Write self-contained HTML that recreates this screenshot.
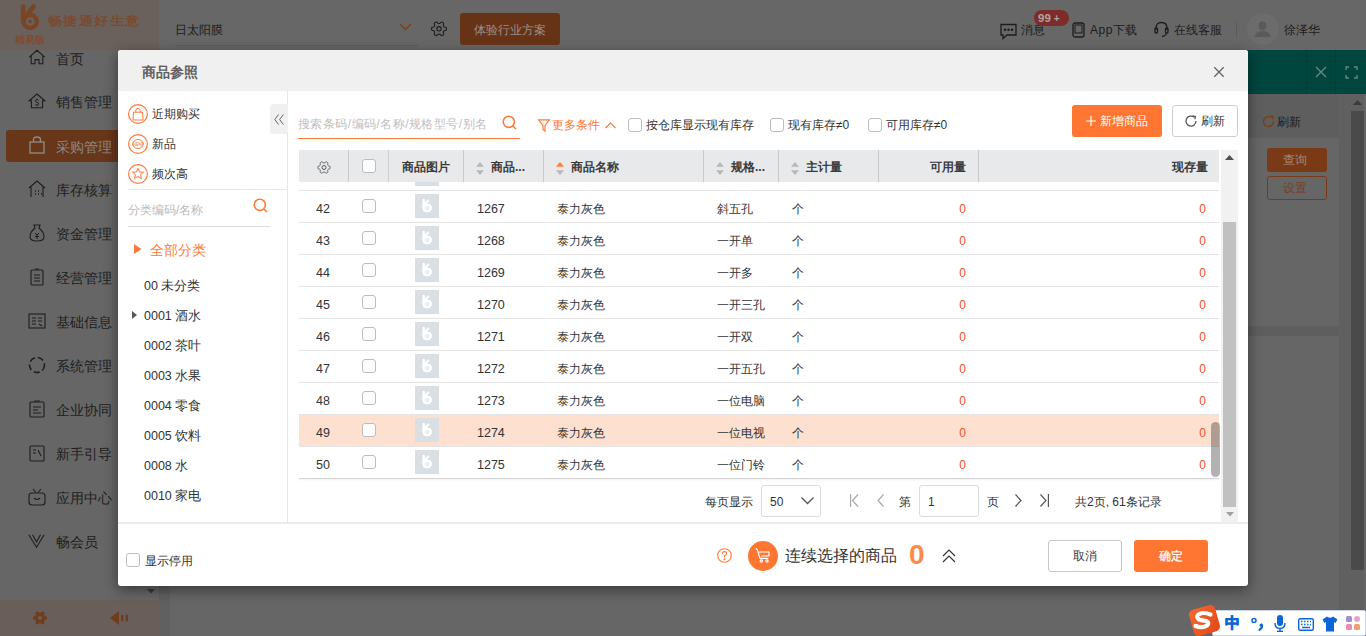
<!DOCTYPE html>
<html><head><meta charset="utf-8">
<style>
*{box-sizing:border-box;margin:0;padding:0}
html,body{width:1366px;height:636px;overflow:hidden;background:#666;font-family:"Liberation Sans",sans-serif;font-size:12px;color:#333}
.a{position:absolute}
svg{position:absolute;overflow:visible}
/* background page (darkened) */
#side{left:0;top:0;width:159px;height:636px;background:#666}
#logo{left:0;top:0;width:159px;height:50px;background:#6a615c}
#sbot{left:0;top:600px;width:159px;height:36px;background:#695e59}
#gap{left:159px;top:0;width:11px;height:636px;background:#606060}
#top{left:159px;top:0;width:1207px;height:50px;background:#676767}
.mi{position:absolute;left:56px;font-size:14px;color:#1e1e1e;line-height:20px}
.mic{position:absolute;left:28px;width:18px;height:18px}
#modal{left:118px;top:50px;width:1130px;height:536px;background:#fff;border-radius:3px;box-shadow:0 4px 14px rgba(0,0,0,.45);overflow:hidden}
#mhead{left:0;top:0;width:1130px;height:41px;background:#f0f0f0}
.t{position:absolute;white-space:nowrap;line-height:16px}
.row{position:absolute;left:181px;width:920px;height:32px;border-top:1px solid #e4e4e4}
.cell{position:absolute;top:10px;white-space:nowrap;line-height:16px;font-size:12px;color:#333}
.cb{position:absolute;width:14px;height:14px;border:1px solid #bdbdbd;border-radius:3px;background:#fff}
.img{position:absolute;left:297px;width:24px;height:24px;background:#dadfe3}
.num{font-size:12.5px}
.z{color:#f24e1e}
</style></head>
<body>

<!-- sidebar -->
<div class="a" id="side"></div>
<div class="a" style="left:142px;top:50px;width:17px;height:550px;background:#676767"></div>
<svg style="left:147px;top:589px" width="8" height="5"><path d="M0 0H8L4 4.5Z" fill="#3a3a3a"/></svg>
<div class="a" id="logo"></div>
<svg style="left:0;top:0" width="45" height="35" fill="none" stroke="#7a4526" stroke-linecap="round"><path d="M23.2 6.6V21.5" stroke-width="4.8"/><path d="M33.4 6.6L28.5 13" stroke-width="4.8"/><circle cx="30.2" cy="21.4" r="6.6" stroke-width="4.4"/><path d="M30.2 19L32.6 21.4L30.2 23.8L27.8 21.4Z" fill="#7a4526" stroke="none"/></svg>
<div class="t" style="left:48px;top:14.5px;font-size:14px;font-weight:bold;color:#7a4a30;letter-spacing:1.4px;line-height:15px;transform:scaleY(0.84);transform-origin:0 0">畅捷通好生意</div>
<div class="t" style="left:15px;top:33px;font-size:10px;color:#84482a;line-height:14px;-webkit-text-stroke:0.2px #84482a">精易版</div>
<div class="a" id="sbot"></div>
<svg style="left:33px;top:611px" width="14" height="14" viewBox="0 0 14 14"><path fill-rule="evenodd" d="M14.05 7.00 L14.04 7.31 L14.01 7.61 L13.96 7.92 L13.85 8.21 L13.56 8.45 L12.89 8.58 L12.23 8.65 L11.92 8.79 L11.78 8.98 L11.68 9.18 L11.57 9.38 L11.46 9.58 L11.35 9.77 L11.23 9.96 L11.11 10.15 L11.01 10.37 L11.04 10.70 L11.31 11.31 L11.54 11.95 L11.47 12.33 L11.28 12.57 L11.04 12.77 L10.78 12.94 L10.52 13.10 L10.25 13.25 L9.98 13.38 L9.69 13.49 L9.38 13.54 L9.02 13.41 L8.58 12.89 L8.19 12.35 L7.91 12.16 L7.68 12.13 L7.45 12.14 L7.22 12.15 L7.00 12.15 L6.78 12.15 L6.55 12.14 L6.32 12.13 L6.09 12.16 L5.81 12.35 L5.42 12.89 L4.98 13.41 L4.62 13.54 L4.31 13.49 L4.02 13.38 L3.75 13.25 L3.48 13.10 L3.22 12.94 L2.96 12.77 L2.72 12.57 L2.53 12.33 L2.46 11.95 L2.69 11.31 L2.96 10.70 L2.99 10.37 L2.89 10.15 L2.77 9.96 L2.65 9.77 L2.54 9.58 L2.43 9.38 L2.32 9.18 L2.22 8.98 L2.08 8.79 L1.77 8.65 L1.11 8.58 L0.44 8.45 L0.15 8.21 L0.04 7.92 L-0.01 7.61 L-0.04 7.31 L-0.05 7.00 L-0.04 6.69 L-0.01 6.39 L0.04 6.08 L0.15 5.79 L0.44 5.55 L1.11 5.42 L1.77 5.35 L2.08 5.21 L2.22 5.02 L2.32 4.82 L2.43 4.62 L2.54 4.42 L2.65 4.23 L2.77 4.04 L2.89 3.85 L2.99 3.63 L2.96 3.30 L2.69 2.69 L2.46 2.05 L2.53 1.67 L2.72 1.43 L2.96 1.23 L3.22 1.06 L3.48 0.90 L3.75 0.75 L4.02 0.62 L4.31 0.51 L4.62 0.46 L4.98 0.59 L5.42 1.11 L5.81 1.65 L6.09 1.84 L6.32 1.87 L6.55 1.86 L6.78 1.85 L7.00 1.85 L7.22 1.85 L7.45 1.86 L7.68 1.87 L7.91 1.84 L8.19 1.65 L8.58 1.11 L9.02 0.59 L9.38 0.46 L9.69 0.51 L9.98 0.62 L10.25 0.75 L10.52 0.90 L10.78 1.06 L11.04 1.23 L11.28 1.43 L11.47 1.67 L11.54 2.05 L11.31 2.69 L11.04 3.30 L11.01 3.63 L11.11 3.85 L11.23 4.04 L11.35 4.23 L11.46 4.42 L11.57 4.62 L11.68 4.82 L11.78 5.02 L11.92 5.21 L12.23 5.35 L12.89 5.42 L13.56 5.55 L13.85 5.79 L13.96 6.08 L14.01 6.39 L14.04 6.69Z M9 7 A2 2 0 1 0 5 7 A2 2 0 1 0 9 7Z" fill="#703c1e"/></svg>
<svg style="left:110px;top:611px" width="20" height="14" viewBox="0 0 20 14"><path d="M0 7 L9 0 V14Z" fill="#703c1e"/><rect x="11" y="3.8" width="2.4" height="6.4" fill="#703c1e"/><rect x="15.6" y="3.8" width="2.4" height="6.4" fill="#703c1e"/></svg>
<div class="a" id="gap"></div>
<!-- menu -->
<div class="a" style="left:6px;top:130px;width:148px;height:32px;background:#683619;border-radius:3px"></div>
<div class="mi" style="top:49px">首页</div>
<div class="mi" style="top:92px">销售管理</div>
<div class="mi" style="top:137px;color:#8c8884">采购管理</div>
<div class="mi" style="top:180px">库存核算</div>
<div class="mi" style="top:224px">资金管理</div>
<div class="mi" style="top:268px">经营管理</div>
<div class="mi" style="top:312px">基础信息</div>
<div class="mi" style="top:356px">系统管理</div>
<div class="mi" style="top:400px">企业协同</div>
<div class="mi" style="top:444px">新手引导</div>
<div class="mi" style="top:488px">应用中心</div>
<div class="mi" style="top:532px">畅会员</div>
<svg style="left:28px;top:49px" width="18" height="17" viewBox="0 0 18 17" fill="none" stroke="#1e1e1e" stroke-width="1.1"><path d="M1.2 8.2 L9 1.3 L16.8 8.2 M3.2 6.6 V14.8 H7 V10.6 H11 V14.8 H14.8 V6.6"/></svg>
<svg style="left:28px;top:93px" width="18" height="17" viewBox="0 0 18 17" fill="none" stroke="#1e1e1e" stroke-width="1.1"><path d="M9 1 L16.8 7.8 H14.6 V14.8 H3.4 V7.8 H1.2Z"/><path d="M10.6 7.6 Q10.2 6.6 9 6.6 Q7.4 6.6 7.4 7.9 Q7.4 9 9 9.3 Q10.7 9.6 10.7 10.9 Q10.7 12.2 9 12.2 Q7.7 12.2 7.3 11.2 M9 5.6V6.6M9 12.2V13.2" stroke-width="0.9"/></svg>
<svg style="left:29px;top:136px" width="16" height="18" viewBox="0 0 16 18" fill="none" stroke="#8c8884" stroke-width="1.4"><rect x="1" y="6" width="14" height="11"/><path d="M4.5 6 V3.5 Q4.5 1 8 1 Q11.5 1 11.5 3.5 V6"/></svg>
<svg style="left:28px;top:180px" width="18" height="18" viewBox="0 0 18 18" fill="none" stroke="#1e1e1e" stroke-width="1.1"><path d="M1 8 L9 1 L17 8 M3 7 V17 M15 7 V17"/><path d="M7 11h1M10 11h1M7 14h1M10 14h1M13 14h1" stroke-width="1.6"/></svg>
<svg style="left:29px;top:224px" width="16" height="18" viewBox="0 0 16 18" fill="none" stroke="#1e1e1e" stroke-width="1.1"><path d="M5 1 H11 L10 4 Q15 8 15 13 Q15 17 8 17 Q1 17 1 13 Q1 8 6 4Z"/><path d="M6 9 L8 11 L10 9 M8 11 V15 M6 12.5 H10" stroke-width="1"/></svg>
<svg style="left:30px;top:268px" width="14" height="18" viewBox="0 0 14 18" fill="none" stroke="#1e1e1e" stroke-width="1.1"><rect x="1" y="2" width="12" height="15" rx="1"/><path d="M4 7H10M4 10H10M4 13H10M5 1H9"/></svg>
<svg style="left:28px;top:313px" width="18" height="16" viewBox="0 0 18 16" fill="none" stroke="#1e1e1e" stroke-width="1.1"><rect x="1" y="1" width="16" height="14"/><path d="M4 5H8M4 8H8M4 11H8M10 5H14M10 8H14M11 11L14 13"/></svg>
<svg style="left:28px;top:356px" width="18" height="18" viewBox="0 0 18 18" fill="none" stroke="#1e1e1e" stroke-width="1.5" stroke-dasharray="6 3"><circle cx="9" cy="9" r="7.5"/></svg>
<svg style="left:29px;top:400px" width="16" height="18" viewBox="0 0 16 18" fill="none" stroke="#1e1e1e" stroke-width="1.1"><rect x="1" y="2" width="14" height="15" rx="1"/><path d="M5 1H11M4 7H12M4 10H9M4 13H12"/></svg>
<svg style="left:29px;top:444px" width="16" height="18" viewBox="0 0 16 18" fill="none" stroke="#1e1e1e" stroke-width="1.1"><rect x="1" y="2" width="14" height="15" rx="1"/><path d="M4 6H7M4 9H7M9 6L12 12"/></svg>
<svg style="left:28px;top:488px" width="18" height="18" viewBox="0 0 18 18" fill="none" stroke="#1e1e1e" stroke-width="1.1"><rect x="1" y="5" width="16" height="12" rx="3"/><path d="M5 1L8 4.5M13 1L10 4.5M6 10Q9 13 12 10"/></svg>
<svg style="left:28px;top:534px" width="17" height="14" viewBox="0 0 17 14" fill="none" stroke="#1e1e1e" stroke-width="1.1"><path d="M0.8 0.8 L8.5 13.2 L16.2 0.8 M4.5 0.8 L8.5 7.8 L12.5 0.8"/></svg>
<!-- top header -->
<div class="a" id="top"></div>
<div class="t" style="left:175px;top:22px;font-size:12px;color:#1c1c1c">日太阳膜</div>
<div class="a" style="left:175px;top:45px;width:243px;height:1px;background:#5a5a5a"></div>
<svg style="left:399px;top:23px" width="13" height="8"><path d="M1 1 L6.5 6.5 L12 1" fill="none" stroke="#7a3e1c" stroke-width="1.4"/></svg>
<svg style="left:431px;top:21px" width="17" height="17" viewBox="0 0 17 17" fill="none" stroke="#1c1c1c" stroke-width="1.05"><path d="M15.46 7.80 L15.44 8.19 L15.38 8.58 L15.22 8.94 L14.85 9.26 L14.18 9.46 L13.51 9.59 L13.13 9.77 L12.92 9.99 L12.77 10.23 L12.62 10.47 L12.49 10.71 L12.36 10.96 L12.27 11.26 L12.31 11.68 L12.53 12.33 L12.69 13.01 L12.60 13.48 L12.36 13.80 L12.06 14.05 L11.73 14.26 L11.38 14.44 L11.02 14.58 L10.62 14.62 L10.16 14.46 L9.66 13.98 L9.20 13.47 L8.86 13.22 L8.56 13.15 L8.28 13.14 L8.00 13.14 L7.72 13.14 L7.44 13.15 L7.14 13.22 L6.80 13.47 L6.34 13.98 L5.84 14.46 L5.38 14.62 L4.98 14.58 L4.62 14.44 L4.27 14.26 L3.94 14.05 L3.64 13.80 L3.40 13.48 L3.31 13.01 L3.47 12.33 L3.69 11.68 L3.73 11.26 L3.64 10.96 L3.51 10.71 L3.38 10.47 L3.23 10.23 L3.08 9.99 L2.87 9.77 L2.49 9.59 L1.82 9.46 L1.15 9.26 L0.78 8.94 L0.62 8.58 L0.56 8.19 L0.54 7.80 L0.56 7.41 L0.62 7.02 L0.78 6.66 L1.15 6.34 L1.82 6.14 L2.49 6.01 L2.87 5.83 L3.08 5.61 L3.23 5.37 L3.38 5.13 L3.51 4.89 L3.64 4.64 L3.73 4.34 L3.69 3.92 L3.47 3.27 L3.31 2.59 L3.40 2.12 L3.64 1.80 L3.94 1.55 L4.27 1.34 L4.62 1.16 L4.98 1.02 L5.38 0.98 L5.84 1.14 L6.34 1.62 L6.80 2.13 L7.14 2.38 L7.44 2.45 L7.72 2.46 L8.00 2.46 L8.28 2.46 L8.56 2.45 L8.86 2.38 L9.20 2.13 L9.66 1.62 L10.16 1.14 L10.62 0.98 L11.02 1.02 L11.38 1.16 L11.73 1.34 L12.06 1.55 L12.36 1.80 L12.60 2.12 L12.69 2.59 L12.53 3.27 L12.31 3.92 L12.27 4.34 L12.36 4.64 L12.49 4.89 L12.62 5.13 L12.77 5.37 L12.92 5.61 L13.13 5.83 L13.51 6.01 L14.18 6.14 L14.85 6.34 L15.22 6.66 L15.38 7.02 L15.44 7.41Z"/><circle cx="8" cy="7.8" r="2.2"/></svg>
<div class="a" style="left:460px;top:13px;width:100px;height:32px;background:#673316;border-radius:3px"></div>
<div class="t" style="left:474px;top:22px;font-size:12px;color:#9a8f8a">体验行业方案</div>
<svg style="left:1000px;top:23px" width="17" height="17" viewBox="0 0 17 17" fill="none" stroke="#1c1c1c" stroke-width="1.3"><path d="M1 1.5 H16 V12 H7 L3 15.5 V12 H1Z"/><circle cx="5" cy="6.8" r="0.6" fill="#1c1c1c"/><circle cx="8.5" cy="6.8" r="0.6" fill="#1c1c1c"/><circle cx="12" cy="6.8" r="0.6" fill="#1c1c1c"/></svg>
<div class="t" style="left:1021px;top:22px;font-size:12px;color:#1c1c1c">消息</div>
<div class="a" style="left:1034px;top:10px;width:35px;height:16px;background:#7e2c2a;border-radius:8px"></div>
<div class="t" style="left:1038px;top:10px;font-size:11.5px;font-weight:bold;color:#b0a2a2;line-height:16px">99<span style="font-size:10px;margin-left:3px">+</span></div>
<svg style="left:1072px;top:22px" width="13" height="16" viewBox="0 0 13 16" fill="none" stroke="#1c1c1c" stroke-width="1.3"><rect x="1" y="1" width="11" height="14" rx="2"/><rect x="3" y="3" width="7" height="8" stroke-width="1"/></svg>
<div class="t" style="left:1090px;top:22px;font-size:12px;color:#1c1c1c;letter-spacing:0.5px">App下载</div>
<svg style="left:1154px;top:21px" width="15" height="17" viewBox="0 0 15 17" fill="none" stroke="#1c1c1c" stroke-width="1.3"><path d="M2 9 V7 Q2 1.5 7.5 1.5 Q13 1.5 13 7 V9"/><rect x="1" y="7" width="2.5" height="5" rx="1"/><rect x="11.5" y="7" width="2.5" height="5" rx="1"/><path d="M12.5 12 Q12 15 8 15.5"/></svg>
<div class="t" style="left:1174px;top:22px;font-size:12px;color:#1c1c1c">在线客服</div>
<div class="a" style="left:1236px;top:21px;width:1px;height:16px;background:#5a5a5a"></div>
<div class="a" style="left:1247px;top:13px;width:32px;height:32px;border-radius:50%;background:#6c6c6c"></div>
<svg style="left:1254px;top:20px" width="17" height="18" viewBox="0 0 17 18"><ellipse cx="8.5" cy="5.8" rx="4" ry="4.6" fill="#5a5a5a"/><path d="M0.5 17 Q1.5 11.2 8.5 11 Q15.5 11.2 16.5 17Z" fill="#5a5a5a"/></svg>
<div class="t" style="left:1284px;top:22px;font-size:12px;color:#1c1c1c">徐泽华</div>
<!-- right background panel -->
<div class="a" style="left:1100px;top:50px;width:266px;height:44px;background:#00463f"></div>
<div class="a" style="left:1306px;top:50px;width:1px;height:44px;background:#003f36"></div>
<div class="a" style="left:1335px;top:50px;width:1px;height:44px;background:#003f36"></div>
<svg style="left:1315px;top:66px" width="12" height="12"><path d="M1 1L11 11M11 1L1 11" stroke="#5f8a83" stroke-width="1.4"/></svg>
<svg style="left:1345px;top:66px" width="13" height="13" fill="none" stroke="#5f8a83" stroke-width="1.4"><path d="M1 4V1H4M9 1H12V4M12 9V12H9M4 12H1V9"/></svg>
<div class="a" style="left:1100px;top:94px;width:251px;height:44px;background:#5e5e5e"></div>
<svg style="left:1262px;top:115px" width="13" height="13" viewBox="0 0 13 13" fill="none" stroke="#7a3e1c" stroke-width="1.5"><path d="M11.5 6.5 A5 5 0 1 1 9.5 2.5"/><path d="M8 1 L11 1.5 L10.5 4.5" stroke-width="1.3"/></svg>
<div class="t" style="left:1277px;top:114px;font-size:12px;color:#1c1c1c">刷新</div>
<div class="a" style="left:1100px;top:138px;width:239px;height:188px;background:#666"></div>
<div class="a" style="left:1100px;top:326px;width:239px;height:10px;background:#5e5e5e"></div>
<div class="a" style="left:1100px;top:336px;width:239px;height:300px;background:#666"></div>
<div class="a" style="left:1339px;top:94px;width:12px;height:542px;background:#606060"></div>
<div class="a" style="left:1351px;top:94px;width:13px;height:542px;background:#606060"></div>
<svg style="left:1353px;top:100px" width="9" height="6"><path d="M0 5H9L4.5 0Z" fill="#3a3a3a"/></svg>
<div class="a" style="left:1351px;top:111px;width:13px;height:459px;background:#4a4a4a;border-radius:0 0 2px 2px"></div>
<div class="a" style="left:1267px;top:148px;width:60px;height:24px;background:#7a3a16;border-radius:3px"></div>
<div class="t" style="left:1283px;top:152px;font-size:12px;color:#a08a7e">查询</div>
<div class="a" style="left:1267px;top:176px;width:60px;height:24px;border:1px solid #7a3a16;border-radius:3px"></div>
<div class="t" style="left:1283px;top:180px;font-size:12px;color:#7a3e1c">设置</div>


<div class="a" id="modal">
 <div class="a" id="mhead"></div>
 <div class="t" style="left:24px;top:14px;font-size:14px;font-weight:bold;color:#606060;line-height:16px">商品参照</div>
 <svg style="left:1096px;top:17px" width="10" height="10"><path d="M0.3 0.3L9.7 9.7M9.7 0.3L0.3 9.7" stroke="#606060" stroke-width="1.25"/></svg>
 <!-- left panel -->
 <div class="a" style="left:169px;top:41px;width:1px;height:431px;background:#e6e6e6"></div>
 <div class="a" style="left:152px;top:54px;width:18px;height:30px;background:#f0f0f0;border-radius:3px 0 0 3px"></div>
 <svg style="left:156px;top:64px" width="10" height="11" fill="none" stroke="#666" stroke-width="1"><path d="M4.6 0.5L0.8 5.5L4.6 10.5M9.4 0.5L5.6 5.5L9.4 10.5"/></svg>
 <svg style="left:10px;top:54px" width="20" height="20" fill="none" stroke="#fe7a3a" stroke-width="1.2"><circle cx="10" cy="10" r="9.4"/><path d="M5.5 8.2H14.5L15 16H5Z M7.8 8.2V6.3Q7.8 4.3 10 4.3Q12.2 4.3 12.2 6.3V8.2" stroke-width="1"/></svg>
 <div class="t" style="left:34px;top:56px;font-size:12px;color:#333">近期购买</div>
 <svg style="left:10px;top:84px" width="20" height="20" fill="none" stroke="#fe7a3a" stroke-width="1.2"><circle cx="10" cy="10" r="9.4"/><path d="M4.5 10 Q6 5.5 10 5.5 Q14 5.5 15.5 10 Q14 14.5 10 14.5 Q6 14.5 4.5 10Z" stroke-width="1"/><text x="10" y="11.6" font-size="4.5" text-anchor="middle" fill="#fe7a3a" stroke="none" font-family="Liberation Sans">NEW</text></svg>
 <div class="t" style="left:34px;top:86px;font-size:12px;color:#333">新品</div>
 <svg style="left:10px;top:114px" width="20" height="20" fill="none" stroke="#fe7a3a" stroke-width="1.2"><circle cx="10" cy="10" r="9.4"/><path d="M10 4.3L11.6 8L15.5 8.2L12.5 10.7L13.5 14.6L10 12.4L6.5 14.6L7.5 10.7L4.5 8.2L8.4 8Z" stroke-width="1"/></svg>
 <div class="t" style="left:34px;top:116px;font-size:12px;color:#333">频次高</div>
 <div class="a" style="left:10px;top:139px;width:160px;height:1px;background:#e8e8e8"></div>
 <div class="t" style="left:10px;top:152px;font-size:12px;color:#bbb">分类编码/名称</div>
 <svg style="left:135px;top:148px" width="15" height="15" fill="none" stroke="#fe7a3a" stroke-width="1.6"><circle cx="6.8" cy="6.8" r="5.6"/><path d="M11 11L14 14"/></svg>
 <div class="a" style="left:10px;top:176px;width:142px;height:1px;background:#dcdcdc"></div>
 <svg style="left:16px;top:194px" width="8" height="10"><path d="M0 0L7.5 5L0 10Z" fill="#fe7a3a"/></svg>
 <div class="t" style="left:32px;top:192px;font-size:14px;color:#fe7a3a">全部分类</div>
 <div class="t" style="left:26px;top:228px;font-size:12.5px;color:#333">00 未分类</div>
<div class="t" style="left:26px;top:258px;font-size:12.5px;color:#333">0001 酒水</div>
<svg style="left:14px;top:261px" width="5" height="8"><path d="M0 0L5 4L0 8Z" fill="#555"/></svg>
<div class="t" style="left:26px;top:288px;font-size:12.5px;color:#333">0002 茶叶</div>
<div class="t" style="left:26px;top:318px;font-size:12.5px;color:#333">0003 水果</div>
<div class="t" style="left:26px;top:348px;font-size:12.5px;color:#333">0004 零食</div>
<div class="t" style="left:26px;top:378px;font-size:12.5px;color:#333">0005 饮料</div>
<div class="t" style="left:26px;top:408px;font-size:12.5px;color:#333">0008 水</div>
<div class="t" style="left:26px;top:438px;font-size:12.5px;color:#333">0010 家电</div>

 <div class="a" style="left:0;top:472px;width:1130px;height:2px;background:#ececec"></div>
 <div class="cb" style="left:8px;top:503px;width:14px;height:14px"></div>
 <div class="t" style="left:27px;top:503px;font-size:12px;color:#333">显示停用</div>
 <!-- toolbar -->
 <div class="t" style="left:180px;top:66px;font-size:12px;color:#c0c0c0;letter-spacing:0.45px">搜索条码/编码/名称/规格型号/别名</div>
 <svg style="left:384px;top:65px" width="15" height="15" fill="none" stroke="#fe7a3a" stroke-width="1.6"><circle cx="6.8" cy="6.8" r="5.6"/><path d="M11 11L14 14"/></svg>
 <div class="a" style="left:180px;top:88px;width:222px;height:1.3px;background:#fe7a3a"></div>
 <svg style="left:420px;top:69px" width="12" height="13" fill="none" stroke="#fe7a3a" stroke-width="1.2"><path d="M0.6 0.8H11.4L7 6.5V12L5 10.5V6.5Z"/></svg>
 <div class="t" style="left:434px;top:67px;font-size:12px;color:#fe7a3a">更多条件</div>
 <svg style="left:487px;top:72px" width="11" height="7" fill="none" stroke="#fe7a3a" stroke-width="1.2"><path d="M0.5 6L5.5 1L10.5 6"/></svg>
 <div class="cb" style="left:510px;top:68px"></div>
 <div class="t" style="left:528px;top:67px;font-size:12px;color:#333">按仓库显示现有库存</div>
 <div class="cb" style="left:652px;top:68px"></div>
 <div class="t" style="left:670px;top:67px;font-size:12px;color:#333">现有库存≠0</div>
 <div class="cb" style="left:750px;top:68px"></div>
 <div class="t" style="left:768px;top:67px;font-size:12px;color:#333">可用库存≠0</div>
 <div class="a" style="left:954px;top:55px;width:90px;height:32px;background:#fe7632;border-radius:3px"></div>
 <svg style="left:968px;top:66px" width="10" height="10"><path d="M5 0V10M0 5H10" stroke="#fff" stroke-width="1.2"/></svg><div class="t" style="left:982px;top:63px;font-size:12px;color:#fff">新增商品</div>
 <div class="a" style="left:1054px;top:55px;width:66px;height:32px;border:1px solid #cfcfcf;border-radius:3px"></div>
 <svg style="left:1067px;top:65px" width="12" height="12" fill="none" stroke="#555" stroke-width="1.3"><path d="M11 6A5 5 0 1 1 9.2 2.2"/><path d="M7.6 0.8L10.4 1.4L9.9 4.2"/></svg>
 <div class="t" style="left:1083px;top:63px;font-size:12px;color:#333">刷新</div>
 <!-- table -->
 <div class="a" style="left:181px;top:100px;width:920px;height:32px;background:#e8e9eb"></div>
 <div class="a" style="left:230px;top:100px;width:1px;height:32px;background:#c9c9c9"></div>
 <div class="a" style="left:270px;top:100px;width:1px;height:32px;background:#d0d0d0"></div>
 <div class="a" style="left:345px;top:100px;width:1px;height:32px;background:#c9c9c9"></div>
 <div class="a" style="left:425px;top:100px;width:1px;height:32px;background:#c9c9c9"></div>
 <div class="a" style="left:585px;top:100px;width:1px;height:32px;background:#c9c9c9"></div>
 <div class="a" style="left:660px;top:100px;width:1px;height:32px;background:#c9c9c9"></div>
 <div class="a" style="left:760px;top:100px;width:1px;height:32px;background:#c9c9c9"></div>
 <div class="a" style="left:860px;top:100px;width:1px;height:32px;background:#c9c9c9"></div>
 <svg style="left:199px;top:111px" width="14" height="13" viewBox="0 0 14 13" fill="none" stroke="#555" stroke-width="0.95"><path d="M13.14 6.50 L13.13 6.82 L13.09 7.14 L13.00 7.45 L12.76 7.72 L12.22 7.90 L11.67 8.02 L11.41 8.19 L11.27 8.40 L11.15 8.62 L11.04 8.83 L10.91 9.04 L10.78 9.25 L10.67 9.47 L10.65 9.79 L10.82 10.32 L10.94 10.87 L10.82 11.22 L10.60 11.45 L10.34 11.65 L10.07 11.82 L9.79 11.97 L9.49 12.09 L9.18 12.17 L8.82 12.10 L8.40 11.72 L8.02 11.31 L7.74 11.17 L7.49 11.15 L7.24 11.16 L7.00 11.16 L6.76 11.16 L6.51 11.15 L6.26 11.17 L5.98 11.31 L5.60 11.72 L5.18 12.10 L4.82 12.17 L4.51 12.09 L4.21 11.97 L3.93 11.82 L3.66 11.65 L3.40 11.45 L3.18 11.22 L3.06 10.87 L3.18 10.32 L3.35 9.79 L3.33 9.47 L3.22 9.25 L3.09 9.04 L2.96 8.83 L2.85 8.62 L2.73 8.40 L2.59 8.19 L2.33 8.02 L1.78 7.90 L1.24 7.72 L1.00 7.45 L0.91 7.14 L0.87 6.82 L0.86 6.50 L0.87 6.18 L0.91 5.86 L1.00 5.55 L1.24 5.28 L1.78 5.10 L2.33 4.98 L2.59 4.81 L2.73 4.60 L2.85 4.38 L2.96 4.17 L3.09 3.96 L3.22 3.75 L3.33 3.53 L3.35 3.21 L3.18 2.68 L3.06 2.13 L3.18 1.78 L3.40 1.55 L3.66 1.35 L3.93 1.18 L4.21 1.03 L4.51 0.91 L4.82 0.83 L5.18 0.90 L5.60 1.28 L5.98 1.69 L6.26 1.83 L6.51 1.85 L6.76 1.84 L7.00 1.84 L7.24 1.84 L7.49 1.85 L7.74 1.83 L8.02 1.69 L8.40 1.28 L8.82 0.90 L9.18 0.83 L9.49 0.91 L9.79 1.03 L10.07 1.18 L10.34 1.35 L10.60 1.55 L10.82 1.78 L10.94 2.13 L10.82 2.68 L10.65 3.21 L10.67 3.53 L10.78 3.75 L10.91 3.96 L11.04 4.17 L11.15 4.38 L11.27 4.60 L11.41 4.81 L11.67 4.98 L12.22 5.10 L12.76 5.28 L13.00 5.55 L13.09 5.86 L13.13 6.18Z"/><circle cx="7" cy="6.5" r="2"/></svg>
 <div class="cb" style="left:244px;top:109px"></div>
 <div class="t" style="left:284px;top:109px;font-size:12px;font-weight:bold;color:#3a3a3a">商品图片</div>
 <svg style="left:358px;top:112px" width="8" height="14"><path d="M0 4.7L4 0L8 4.7Z M0 8.3L4 13L8 8.3Z" fill="#b8b8b8"/></svg>
 <div class="t" style="left:373px;top:109px;font-size:12px;font-weight:bold;color:#3a3a3a">商品...</div>
 <svg style="left:438px;top:112px" width="8" height="14"><path d="M0 4.7L4 0L8 4.7Z" fill="#fe7a3a"/><path d="M0 8.3L4 13L8 8.3Z" fill="#b8b8b8"/></svg>
 <div class="t" style="left:453px;top:109px;font-size:12px;font-weight:bold;color:#3a3a3a">商品名称</div>
 <svg style="left:598px;top:112px" width="8" height="14"><path d="M0 4.7L4 0L8 4.7Z M0 8.3L4 13L8 8.3Z" fill="#b8b8b8"/></svg>
 <div class="t" style="left:613px;top:109px;font-size:12px;font-weight:bold;color:#3a3a3a">规格...</div>
 <svg style="left:673px;top:112px" width="8" height="14"><path d="M0 4.7L4 0L8 4.7Z M0 8.3L4 13L8 8.3Z" fill="#b8b8b8"/></svg>
 <div class="t" style="left:688px;top:109px;font-size:12px;font-weight:bold;color:#3a3a3a">主计量</div>
 <div class="t" style="left:812px;top:109px;font-size:12px;font-weight:bold;color:#3a3a3a">可用量</div>
 <div class="t" style="left:1054px;top:109px;font-size:12px;font-weight:bold;color:#3a3a3a">现存量</div>
 <div class="a" style="left:181px;top:132px;width:920px;height:340px;overflow:hidden">
  <div class="img" style="left:116px;top:-20px"></div>
 </div>
 <div class="a" style="left:0;top:0;width:1130px;height:0;">
 <div class="row" style="top:140px;">
<div class="cell num" style="left:17px">42</div>
<div class="cb" style="left:63px;top:8px"></div>
<div class="img" style="left:116px;top:3px"><svg style="left:6px;top:3px" width="12" height="17" viewBox="0 0 22 27"><path d="M3 3 Q3 1 5 1 Q7 1 7 3 L7 9 Q9 5 12 3 Q14 2 15 3.5 Q16 5 14 7 Q12 9 11 11 Q13 10 15 10.5 Q20 12 20 18 Q20 25 12 26 Q3 26 2 17 Z" fill="#fff"/><circle cx="11.5" cy="18" r="3.6" fill="#dadfe3"/><path d="M11.5 15.6 L13.9 18 L11.5 20.4 L9.1 18Z" fill="#fff"/></svg></div>
<div class="cell num" style="left:178px">1267</div>
<div class="cell" style="left:258px">泰力灰色</div>
<div class="cell" style="left:418px">斜五孔</div>
<div class="cell" style="left:493px">个</div>
<div class="cell z" style="left:657px;width:10px;text-align:right">0</div>
<div class="cell z" style="left:897px;width:10px;text-align:right">0</div>
</div>
<div class="row" style="top:172px;">
<div class="cell num" style="left:17px">43</div>
<div class="cb" style="left:63px;top:8px"></div>
<div class="img" style="left:116px;top:3px"><svg style="left:6px;top:3px" width="12" height="17" viewBox="0 0 22 27"><path d="M3 3 Q3 1 5 1 Q7 1 7 3 L7 9 Q9 5 12 3 Q14 2 15 3.5 Q16 5 14 7 Q12 9 11 11 Q13 10 15 10.5 Q20 12 20 18 Q20 25 12 26 Q3 26 2 17 Z" fill="#fff"/><circle cx="11.5" cy="18" r="3.6" fill="#dadfe3"/><path d="M11.5 15.6 L13.9 18 L11.5 20.4 L9.1 18Z" fill="#fff"/></svg></div>
<div class="cell num" style="left:178px">1268</div>
<div class="cell" style="left:258px">泰力灰色</div>
<div class="cell" style="left:418px">一开单</div>
<div class="cell" style="left:493px">个</div>
<div class="cell z" style="left:657px;width:10px;text-align:right">0</div>
<div class="cell z" style="left:897px;width:10px;text-align:right">0</div>
</div>
<div class="row" style="top:204px;">
<div class="cell num" style="left:17px">44</div>
<div class="cb" style="left:63px;top:8px"></div>
<div class="img" style="left:116px;top:3px"><svg style="left:6px;top:3px" width="12" height="17" viewBox="0 0 22 27"><path d="M3 3 Q3 1 5 1 Q7 1 7 3 L7 9 Q9 5 12 3 Q14 2 15 3.5 Q16 5 14 7 Q12 9 11 11 Q13 10 15 10.5 Q20 12 20 18 Q20 25 12 26 Q3 26 2 17 Z" fill="#fff"/><circle cx="11.5" cy="18" r="3.6" fill="#dadfe3"/><path d="M11.5 15.6 L13.9 18 L11.5 20.4 L9.1 18Z" fill="#fff"/></svg></div>
<div class="cell num" style="left:178px">1269</div>
<div class="cell" style="left:258px">泰力灰色</div>
<div class="cell" style="left:418px">一开多</div>
<div class="cell" style="left:493px">个</div>
<div class="cell z" style="left:657px;width:10px;text-align:right">0</div>
<div class="cell z" style="left:897px;width:10px;text-align:right">0</div>
</div>
<div class="row" style="top:236px;">
<div class="cell num" style="left:17px">45</div>
<div class="cb" style="left:63px;top:8px"></div>
<div class="img" style="left:116px;top:3px"><svg style="left:6px;top:3px" width="12" height="17" viewBox="0 0 22 27"><path d="M3 3 Q3 1 5 1 Q7 1 7 3 L7 9 Q9 5 12 3 Q14 2 15 3.5 Q16 5 14 7 Q12 9 11 11 Q13 10 15 10.5 Q20 12 20 18 Q20 25 12 26 Q3 26 2 17 Z" fill="#fff"/><circle cx="11.5" cy="18" r="3.6" fill="#dadfe3"/><path d="M11.5 15.6 L13.9 18 L11.5 20.4 L9.1 18Z" fill="#fff"/></svg></div>
<div class="cell num" style="left:178px">1270</div>
<div class="cell" style="left:258px">泰力灰色</div>
<div class="cell" style="left:418px">一开三孔</div>
<div class="cell" style="left:493px">个</div>
<div class="cell z" style="left:657px;width:10px;text-align:right">0</div>
<div class="cell z" style="left:897px;width:10px;text-align:right">0</div>
</div>
<div class="row" style="top:268px;">
<div class="cell num" style="left:17px">46</div>
<div class="cb" style="left:63px;top:8px"></div>
<div class="img" style="left:116px;top:3px"><svg style="left:6px;top:3px" width="12" height="17" viewBox="0 0 22 27"><path d="M3 3 Q3 1 5 1 Q7 1 7 3 L7 9 Q9 5 12 3 Q14 2 15 3.5 Q16 5 14 7 Q12 9 11 11 Q13 10 15 10.5 Q20 12 20 18 Q20 25 12 26 Q3 26 2 17 Z" fill="#fff"/><circle cx="11.5" cy="18" r="3.6" fill="#dadfe3"/><path d="M11.5 15.6 L13.9 18 L11.5 20.4 L9.1 18Z" fill="#fff"/></svg></div>
<div class="cell num" style="left:178px">1271</div>
<div class="cell" style="left:258px">泰力灰色</div>
<div class="cell" style="left:418px">一开双</div>
<div class="cell" style="left:493px">个</div>
<div class="cell z" style="left:657px;width:10px;text-align:right">0</div>
<div class="cell z" style="left:897px;width:10px;text-align:right">0</div>
</div>
<div class="row" style="top:300px;">
<div class="cell num" style="left:17px">47</div>
<div class="cb" style="left:63px;top:8px"></div>
<div class="img" style="left:116px;top:3px"><svg style="left:6px;top:3px" width="12" height="17" viewBox="0 0 22 27"><path d="M3 3 Q3 1 5 1 Q7 1 7 3 L7 9 Q9 5 12 3 Q14 2 15 3.5 Q16 5 14 7 Q12 9 11 11 Q13 10 15 10.5 Q20 12 20 18 Q20 25 12 26 Q3 26 2 17 Z" fill="#fff"/><circle cx="11.5" cy="18" r="3.6" fill="#dadfe3"/><path d="M11.5 15.6 L13.9 18 L11.5 20.4 L9.1 18Z" fill="#fff"/></svg></div>
<div class="cell num" style="left:178px">1272</div>
<div class="cell" style="left:258px">泰力灰色</div>
<div class="cell" style="left:418px">一开五孔</div>
<div class="cell" style="left:493px">个</div>
<div class="cell z" style="left:657px;width:10px;text-align:right">0</div>
<div class="cell z" style="left:897px;width:10px;text-align:right">0</div>
</div>
<div class="row" style="top:332px;">
<div class="cell num" style="left:17px">48</div>
<div class="cb" style="left:63px;top:8px"></div>
<div class="img" style="left:116px;top:3px"><svg style="left:6px;top:3px" width="12" height="17" viewBox="0 0 22 27"><path d="M3 3 Q3 1 5 1 Q7 1 7 3 L7 9 Q9 5 12 3 Q14 2 15 3.5 Q16 5 14 7 Q12 9 11 11 Q13 10 15 10.5 Q20 12 20 18 Q20 25 12 26 Q3 26 2 17 Z" fill="#fff"/><circle cx="11.5" cy="18" r="3.6" fill="#dadfe3"/><path d="M11.5 15.6 L13.9 18 L11.5 20.4 L9.1 18Z" fill="#fff"/></svg></div>
<div class="cell num" style="left:178px">1273</div>
<div class="cell" style="left:258px">泰力灰色</div>
<div class="cell" style="left:418px">一位电脑</div>
<div class="cell" style="left:493px">个</div>
<div class="cell z" style="left:657px;width:10px;text-align:right">0</div>
<div class="cell z" style="left:897px;width:10px;text-align:right">0</div>
</div>
<div class="row" style="top:364px;background:#fde0cf;">
<div class="cell num" style="left:17px">49</div>
<div class="cb" style="left:63px;top:8px"></div>
<div class="img" style="left:116px;top:3px"><svg style="left:6px;top:3px" width="12" height="17" viewBox="0 0 22 27"><path d="M3 3 Q3 1 5 1 Q7 1 7 3 L7 9 Q9 5 12 3 Q14 2 15 3.5 Q16 5 14 7 Q12 9 11 11 Q13 10 15 10.5 Q20 12 20 18 Q20 25 12 26 Q3 26 2 17 Z" fill="#fff"/><circle cx="11.5" cy="18" r="3.6" fill="#dadfe3"/><path d="M11.5 15.6 L13.9 18 L11.5 20.4 L9.1 18Z" fill="#fff"/></svg></div>
<div class="cell num" style="left:178px">1274</div>
<div class="cell" style="left:258px">泰力灰色</div>
<div class="cell" style="left:418px">一位电视</div>
<div class="cell" style="left:493px">个</div>
<div class="cell z" style="left:657px;width:10px;text-align:right">0</div>
<div class="cell z" style="left:897px;width:10px;text-align:right">0</div>
</div>
<div class="row" style="top:396px;">
<div class="cell num" style="left:17px">50</div>
<div class="cb" style="left:63px;top:8px"></div>
<div class="img" style="left:116px;top:3px"><svg style="left:6px;top:3px" width="12" height="17" viewBox="0 0 22 27"><path d="M3 3 Q3 1 5 1 Q7 1 7 3 L7 9 Q9 5 12 3 Q14 2 15 3.5 Q16 5 14 7 Q12 9 11 11 Q13 10 15 10.5 Q20 12 20 18 Q20 25 12 26 Q3 26 2 17 Z" fill="#fff"/><circle cx="11.5" cy="18" r="3.6" fill="#dadfe3"/><path d="M11.5 15.6 L13.9 18 L11.5 20.4 L9.1 18Z" fill="#fff"/></svg></div>
<div class="cell num" style="left:178px">1275</div>
<div class="cell" style="left:258px">泰力灰色</div>
<div class="cell" style="left:418px">一位门铃</div>
<div class="cell" style="left:493px">个</div>
<div class="cell z" style="left:657px;width:10px;text-align:right">0</div>
<div class="cell z" style="left:897px;width:10px;text-align:right">0</div>
</div>
 </div>
 <div class="a" style="left:181px;top:428px;width:920px;height:1px;background:#d4d4d4;box-shadow:0 1px 2px rgba(0,0,0,0.08)"></div>
 <div class="a" style="left:1093px;top:372px;width:9px;height:55px;background:rgba(0,0,0,0.3);border-radius:4.5px"></div>
 <!-- outer scrollbar -->
 <div class="a" style="left:1103px;top:100px;width:17px;height:372px;background:#f1f1f1"></div>
 <svg style="left:1107px;top:105px" width="9" height="6"><path d="M0 5H9L4.5 0Z" fill="#505050"/></svg>
 <svg style="left:1108px;top:462px" width="8" height="5"><path d="M0 0H8L4 4.5Z" fill="#a0a0a0"/></svg>
 <div class="a" style="left:1105px;top:172px;width:13px;height:285px;background:#c1c1c1"></div>
 <!-- pagination -->
 <div class="t" style="left:587px;top:444px;font-size:12px;color:#333">每页显示</div>
 <div class="a" style="left:643px;top:435px;width:60px;height:32px;border:1px solid #dcdcdc;border-radius:3px"></div>
 <div class="t" style="left:652px;top:444px;font-size:12px;color:#333">50</div>
 <svg style="left:683px;top:447px" width="13" height="8" fill="none" stroke="#555" stroke-width="1.3"><path d="M0.5 0.5L6.5 6.5L12.5 0.5"/></svg>
 <svg style="left:732px;top:444px" width="9" height="13" fill="none" stroke="#aaa" stroke-width="1.2"><path d="M0.6 0V13M8 0.5L2.5 6.5L8 12.5"/></svg>
 <svg style="left:759px;top:444px" width="7" height="13" fill="none" stroke="#aaa" stroke-width="1.2"><path d="M6.5 0.5L1 6.5L6.5 12.5"/></svg>
 <div class="t" style="left:781px;top:444px;font-size:12px;color:#333">第</div>
 <div class="a" style="left:801px;top:435px;width:60px;height:32px;border:1px solid #dcdcdc;border-radius:3px"></div>
 <div class="t" style="left:810px;top:444px;font-size:12px;color:#333">1</div>
 <div class="t" style="left:869px;top:444px;font-size:12px;color:#333">页</div>
 <svg style="left:897px;top:444px" width="7" height="13" fill="none" stroke="#555" stroke-width="1.2"><path d="M0.5 0.5L6 6.5L0.5 12.5"/></svg>
 <svg style="left:922px;top:444px" width="9" height="13" fill="none" stroke="#555" stroke-width="1.2"><path d="M0.5 0.5L6 6.5L0.5 12.5M8.4 0V13"/></svg>
 <div class="t" style="left:957px;top:444px;font-size:12px;color:#333">共2页, 61条记录</div>
 <!-- footer -->
 <svg style="left:599px;top:498px" width="15" height="15" fill="none" stroke="#fe7a3a" stroke-width="1.1"><circle cx="7.5" cy="7.5" r="6.8"/><path d="M5.3 5.8Q5.3 3.6 7.5 3.6Q9.7 3.6 9.7 5.6Q9.7 6.9 7.5 8V9.3"/><circle cx="7.5" cy="11.2" r="0.5" fill="#fe7a3a"/></svg>
 <div class="a" style="left:630px;top:491px;width:30px;height:30px;border-radius:50%;background:#fe7632"></div>
 <svg style="left:637px;top:498px" width="16" height="16" fill="none" stroke="#fff" stroke-width="1.2"><path d="M0.8 0.6L2.3 1.6L5 10.4H13.2M3.4 4H14V7.6L6.2 8.2"/><circle cx="6.3" cy="13.1" r="1.15"/><circle cx="12" cy="13.1" r="1.15"/></svg>
 <div class="t" style="left:667px;top:496px;font-size:16px;color:#333;line-height:20px">连续选择的商品</div>
 <div class="t" style="left:791px;top:489px;font-size:28px;font-weight:bold;color:#fe8a48;line-height:32px">0</div>
 <svg style="left:824px;top:499px" width="14" height="14" fill="none" stroke="#333" stroke-width="1.2"><path d="M1 7L7 1L13 7M1 13L7 7L13 13"/></svg>
 <div class="a" style="left:930px;top:490px;width:74px;height:32px;border:1px solid #c8c8c8;border-radius:3px"></div>
 <div class="t" style="left:955px;top:498px;font-size:12px;color:#3a3a3a">取消</div>
 <div class="a" style="left:1016px;top:490px;width:74px;height:32px;background:#fe7632;border-radius:3px"></div>
 <div class="t" style="left:1041px;top:498px;font-size:12px;color:#fff;-webkit-text-stroke:0.25px #fff">确定</div>
</div>
<!-- IME bar -->
<div class="a" style="left:1212px;top:610px;width:154px;height:26px;background:#fff;border:1px solid #c9d6ea;border-radius:2px"></div>
<svg style="left:1186px;top:603px" width="36" height="34" viewBox="0 0 36 34"><defs><linearGradient id="sg" x1="0" y1="0" x2="1" y2="1"><stop offset="0" stop-color="#f46a30"/><stop offset="1" stop-color="#e2481a"/></linearGradient></defs><rect x="5" y="4" width="27" height="27" rx="5" transform="rotate(-16 18.5 17.5)" fill="url(#sg)"/><path d="M24.5 11.5 Q17 8.5 12.5 11.5 Q9.5 14 13 16.5 Q16 17.5 20 18 Q24 19.5 21 22.5 Q16.5 25.5 9.5 23" fill="none" stroke="#fff" stroke-width="4.2" stroke-linecap="round"/></svg>
<div class="t" style="left:1225px;top:614px;font-size:15px;font-weight:bold;color:#0a66d6;line-height:18px;-webkit-text-stroke:0.7px #0a66d6">中</div>
<svg style="left:1251px;top:617px" width="14" height="14"><circle cx="3" cy="3.5" r="2" fill="none" stroke="#0a66d6" stroke-width="1.5"/><path d="M10.5 7.5 Q11.5 8.5 10.8 10.5 Q10 12 8.5 12.8" fill="none" stroke="#0a66d6" stroke-width="2.2" stroke-linecap="round"/><circle cx="10" cy="8.3" r="1.5" fill="#0a66d6"/></svg>
<svg style="left:1274px;top:615px" width="12" height="18" fill="#0a66d6"><rect x="3" y="0" width="6" height="11" rx="3"/><path d="M1 8Q1 13.5 6 13.5Q11 13.5 11 8" fill="none" stroke="#0a66d6" stroke-width="1.4"/><rect x="5.3" y="13" width="1.4" height="3"/><rect x="3" y="15.6" width="6" height="1.4"/></svg>
<svg style="left:1298px;top:618px" width="16" height="13"><rect x="0.7" y="0.7" width="14.6" height="11.6" rx="1.5" fill="none" stroke="#0a66d6" stroke-width="1.4"/><path d="M3 3.5h1.5M6 3.5h1.5M9 3.5h1.5M12 3.5h1M3 6.5h1.5M6 6.5h1.5M9 6.5h1.5M12 6.5h1M4 9.5h8" stroke="#0a66d6" stroke-width="1.4"/></svg>
<svg style="left:1322px;top:616px" width="16" height="16"><path d="M5 0.5L0.5 3.5L2.5 7L4 6V15.5H12V6L13.5 7L15.5 3.5L11 0.5Q8 3 5 0.5Z" fill="#0a66d6"/></svg>
<svg style="left:1346px;top:616px" width="14" height="14"><rect x="0" y="0" width="6" height="6" rx="1.5" fill="#a78bd6"/><rect x="8" y="0" width="6" height="6" rx="3" fill="#e6a3c8"/><rect x="0" y="8" width="6" height="6" rx="1.5" fill="#e88bb0"/><rect x="8" y="8" width="6" height="6" rx="1.5" fill="#f0a070"/></svg>


</body></html>
